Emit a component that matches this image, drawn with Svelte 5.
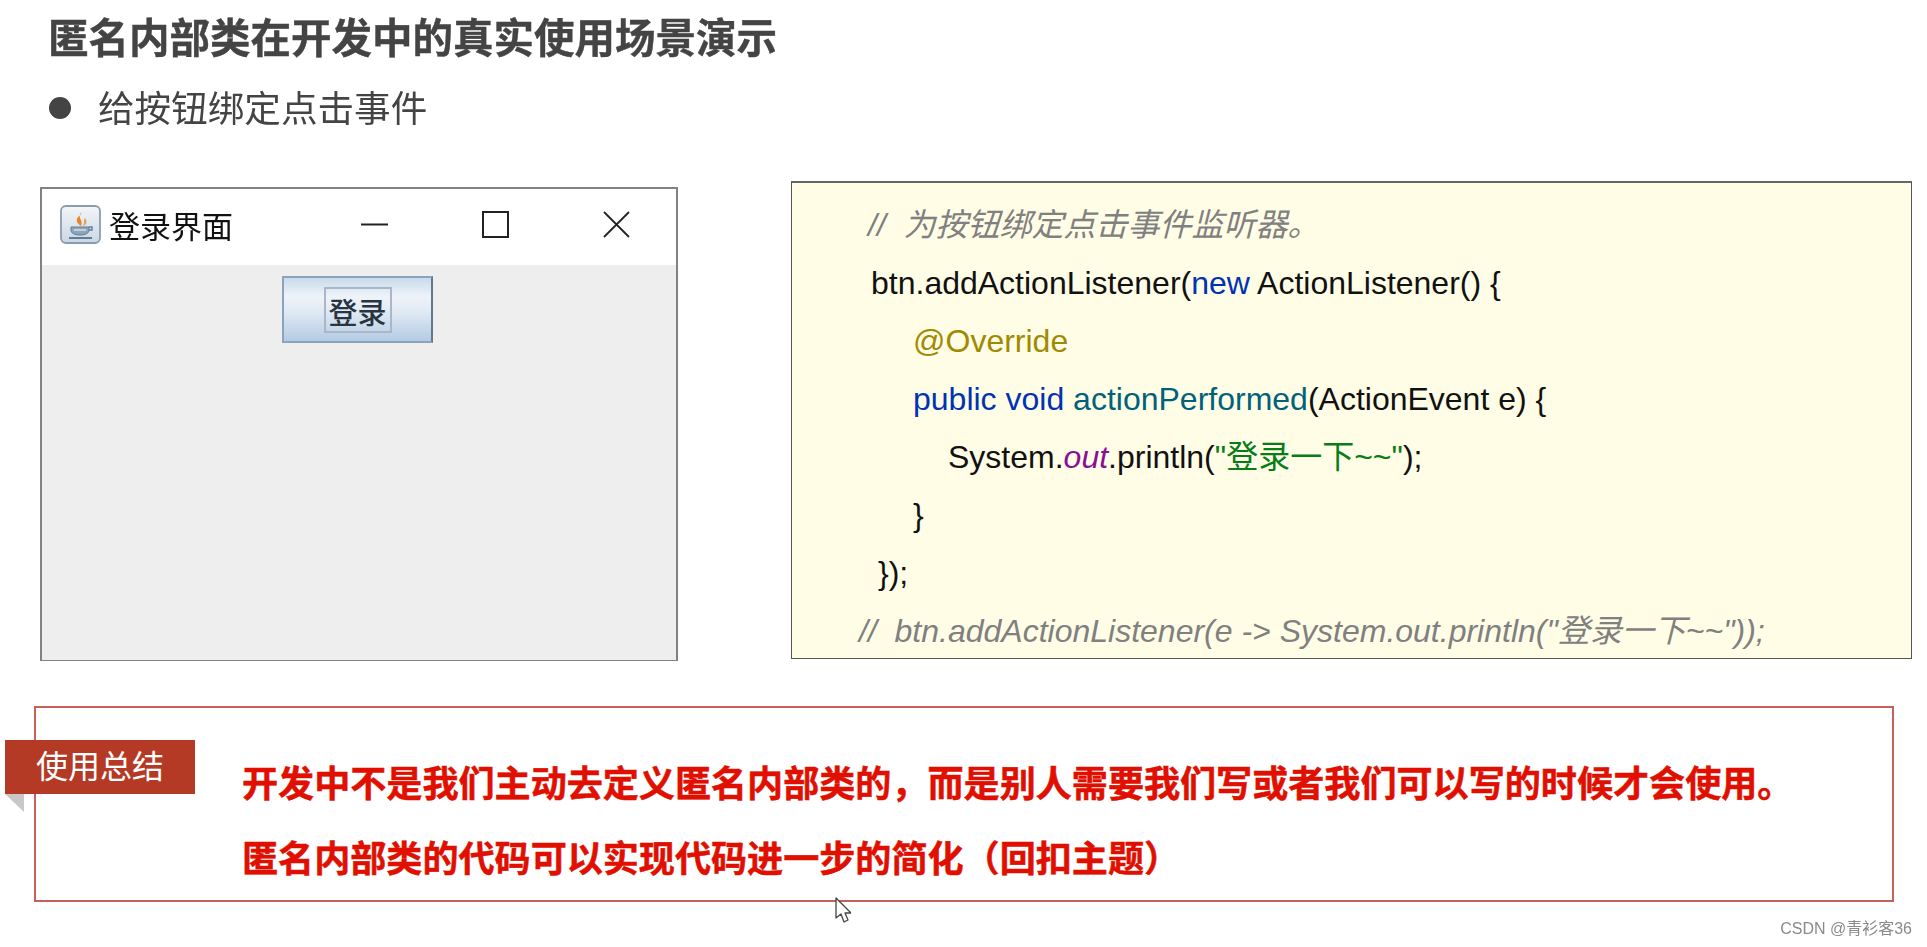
<script>
  const cjk = "登录一下~~";
</script>

<div class="page">
  <h1>匿名内部类在开发中的真实使用场景演示</h1>
  <div class="bullet"><i></i><span>给按钮绑定点击事件</span></div>

  <div class="demo">
    <div class="win">
      <div class="titlebar">
        <svg class="java" viewBox="0 0 41 39" width="41" height="39">
          <defs>
            <linearGradient id="jbg" x1="0" y1="0" x2="0" y2="1">
              <stop offset="0" stop-color="#f4f6f9" />
              <stop offset="1" stop-color="#c9d7e4" />
            </linearGradient>
          </defs>
          <rect x="1" y="1" width="39" height="37" rx="5" fill="url(#jbg)" stroke="#8a9dae" stroke-width="1.8" />
          <path d="M22 7c-6 5 2 8-1 14-3-2-6-5-3-9 2-1 3-3 4-5z" fill="#e8842a" />
          <path d="M25 13c-2 2 0 4-2 8 3-1 5-4 2-8z" fill="#e2a25e" />
          <path d="M11 22h18v3c0 3-3 5-9 5s-9-2-9-5z" fill="#8fa6b9" stroke="#5f7d97" stroke-width="1" />
          <path d="M14 25h12" stroke="#e4ebf1" stroke-width="1.2" />
          <path d="M29 22h3v3h-3" fill="none" stroke="#5f7d97" stroke-width="1.4" />
          <path d="M9 33h23" stroke="#5f7d97" stroke-width="2" />
        </svg>
        <span class="wintitle">登录界面</span>
        <div class="controls">
          <svg viewBox="0 0 27 27" width="27" height="27"><path d="M0 13.5h27" stroke="#222" stroke-width="2" /></svg>
          <svg viewBox="0 0 27 27" width="27" height="27"><rect x="1" y="1" width="25" height="25" fill="none" stroke="#222" stroke-width="2" /></svg>
          <svg viewBox="0 0 27 27" width="27" height="27"><path d="M1 1l25 25M26 1L1 26" fill="none" stroke="#222" stroke-width="1.8" /></svg>
        </div>
      </div>
      <div class="winbody">
        <button class="jbtn"><span>登录</span></button>
      </div>
    </div>

    <div class="code">
      <div class="ln c1">//&nbsp; 为按钮绑定点击事件监听器。</div>
      <div class="ln l1">btn.addActionListener(<b>new</b> ActionListener() &#123;</div>
      <div class="ln l2 ann">@Override</div>
      <div class="ln l2"><b>public void</b> <em>actionPerformed</em>(ActionEvent e) &#123;</div>
      <div class="ln l3">System.<u>out</u>.println(<s>"{cjk}"</s>);</div>
      <div class="ln l2">&#125;</div>
      <div class="ln l4">&#125;);</div>
      <div class="ln c2">//&nbsp; btn.addActionListener(e -&gt; System.out.println("登录一下~~"));</div>
    </div>
  </div>

  <div class="summary">
    <div class="tag">使用总结</div>
    <div class="fold"></div>
    <p>开发中不是我们主动去定义匿名内部类的&#xFF0C;而是别人需要我们写或者我们可以写的时候才会使用。</p>
    <p>匿名内部类的代码可以实现代码进一步的简化&#xFF08;回扣主题&#xFF09;</p>
  </div>

  <div class="mark">CSDN @青衫客36</div>

  <svg class="cursor" viewBox="0 0 16 26" width="16" height="26">
    <path d="M1 1v20l5-4 3 8 4-2-3-7h6z" fill="#fff" stroke="#444" stroke-width="1.3" stroke-linejoin="round" />
  </svg>
</div>

<style>
  :global(body) {
    background: #fff;
  }

  .page {
    position: relative;
    width: 1927px;
    height: 947px;
    overflow: hidden;
    font-family: "Liberation Sans", "Noto Sans CJK SC", sans-serif;
    color: #444;
    filter: blur(0.4px);
  }

  h1 {
    margin: 0;
    padding: 15px 0 0 48px;
    font-size: 40.5px;
    line-height: 48px;
    font-weight: 700;
    color: #444;
    -webkit-text-stroke: 0.4px #444;
  }

  .bullet {
    display: flex;
    align-items: center;
    height: 48px;
    margin-top: 19px;
    padding-left: 49px;
    font-size: 36.6px;
  }

  .bullet i {
    width: 22px;
    height: 22px;
    border-radius: 50%;
    background: #444;
    margin-top: 4px;
    margin-right: 27px;
  }

  .demo {
    display: flex;
    align-items: flex-start;
    margin-top: 51px;
    padding-left: 40px;
  }

  .win {
    box-sizing: border-box;
    width: 638px;
    height: 474px;
    margin-top: 6px;
    margin-right: 113px;
    border: 2px solid #828282;
    border-bottom-width: 1px;
    background: #eee;
    display: flex;
    flex-direction: column;
  }

  .titlebar {
    box-sizing: border-box;
    display: flex;
    align-items: center;
    height: 76px;
    background: #fff;
    padding-left: 18px;
    padding-bottom: 5px;
    color: #111;
  }

  .java {
    margin-right: 8px;
  }

  .wintitle {
    font-size: 31px;
  }

  .controls {
    display: flex;
    gap: 94px;
    margin-left: 128px;
  }

  .winbody {
    display: flex;
    justify-content: center;
    padding-top: 11px;
    padding-right: 3px;
  }

  .jbtn {
    box-sizing: border-box;
    width: 151px;
    height: 67px;
    padding: 0;
    border: 2px solid #8ba3bc;
    border-right-color: #64788c;
    background: linear-gradient(#c9daec 0%, #eef3f9 30%, #dfe9f4 55%, #b4cbe3 100%);
    display: flex;
    align-items: center;
    justify-content: center;
  }

  .jbtn span {
    box-sizing: border-box;
    width: 68px;
    height: 46px;
    border: 2px solid #a9b7c6;
    font-family: "Noto Sans CJK SC", sans-serif;
    font-size: 29px;
    font-weight: 500;
    line-height: 44px;
    color: #2a3440;
    text-align: center;
    white-space: nowrap;
  }

  .code {
    box-sizing: border-box;
    width: 1121px;
    height: 478px;
    border: 1px solid #555;
    border-top: 2px solid #666;
    background: #fffde6;
    padding-top: 13px;
    color: #111;
    font-size: 32px;
  }

  .ln {
    height: 58px;
    line-height: 58px;
    white-space: nowrap;
  }

  .c1 {
    padding-left: 76px;
    font-style: italic;
    color: #808080;
  }

  .c2 {
    padding-left: 67px;
    font-style: italic;
    color: #808080;
  }

  .l1 {
    padding-left: 79px;
  }

  .l2 {
    padding-left: 121px;
  }

  .l3 {
    padding-left: 156px;
  }

  .l4 {
    padding-left: 86px;
  }

  .ann {
    color: #a08a00;
  }

  .code b {
    font-weight: 400;
    color: #0033b3;
  }

  .code em {
    font-style: normal;
    color: #00627a;
  }

  .code u {
    text-decoration: none;
    font-style: italic;
    color: #871094;
  }

  .code s {
    text-decoration: none;
    color: #067d17;
  }

  .summary {
    position: relative;
    box-sizing: border-box;
    width: 1860px;
    height: 196px;
    margin: 45px 0 0 34px;
    padding-top: 39px;
    padding-left: 206px;
    border: 2px solid #c8605a;
    background: #fff;
  }

  .summary p {
    margin: 0;
    height: 75px;
    line-height: 75px;
    font-size: 36.1px;
    font-weight: 700;
    color: #e00f00;
    -webkit-text-stroke: 0.5px #e00f00;
    white-space: nowrap;
  }

  .tag {
    position: absolute;
    left: -31px;
    top: 32px;
    width: 190px;
    height: 54px;
    background: #b53a26;
    color: #fff;
    font-size: 32px;
    line-height: 54px;
    text-align: center;
  }

  .fold {
    position: absolute;
    left: -31px;
    top: 86px;
    border-left: 19px solid transparent;
    border-top: 18px solid #c8c8c8;
  }

  .mark {
    position: absolute;
    right: 15px;
    top: 919px;
    font-size: 16px;
    line-height: 20px;
    color: #8a8a8a;
  }

  .cursor {
    position: absolute;
    left: 835px;
    top: 897px;
  }
</style>
